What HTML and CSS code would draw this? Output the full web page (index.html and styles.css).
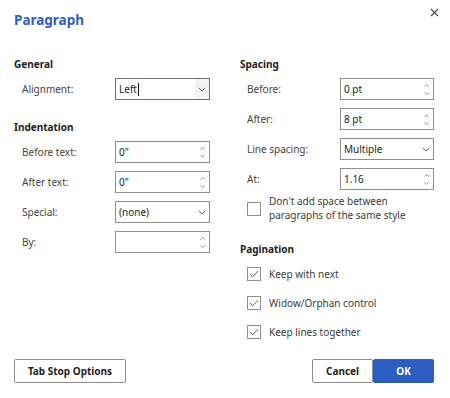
FILE: index.html
```html
<!DOCTYPE html>
<html lang="en">
<head>
<meta charset="utf-8">
<title>Paragraph</title>
<link rel="stylesheet" href="styles.css">
</head>
<body>
<div class="dialog">
  <header class="titlebar">
    <h1 class="title">Paragraph</h1>
    <span class="close"><svg width="9" height="9" viewBox="0 0 9 9"><path d="M1 1L8 8M8 1L1 8" stroke="#444" stroke-width="1.1" fill="none"/></svg></span>
  </header>

  <div class="columns">
    <div class="col col-left">
      <section class="section">
        <h2 class="heading">General</h2>
        <div class="rows">
          <div class="row">
            <span class="label">Alignment:</span>
            <div class="field select focused"><span class="value">Left<span class="cursor"></span></span><span class="caret caret-shaded"><svg width="8" height="5" viewBox="0 0 8 5"><path d="M0.8 0.8L4 4L7.2 0.8" stroke="#555" stroke-width="0.9" fill="none"/></svg></span></div>
          </div>
        </div>
      </section>
      <section class="section">
        <h2 class="heading">Indentation</h2>
        <div class="rows">
          <div class="row">
            <span class="label">Before text:</span>
            <div class="field spin"><span class="value">0"</span><span class="spinner"><svg width="5" height="3" viewBox="0 0 5 3"><path d="M0.5 2.5L2.5 0.6L4.5 2.5" stroke="#888" stroke-width="0.9" fill="none"/></svg><svg width="5" height="3" viewBox="0 0 5 3"><path d="M0.5 0.5L2.5 2.4L4.5 0.5" stroke="#888" stroke-width="0.9" fill="none"/></svg></span></div>
          </div>
          <div class="row">
            <span class="label">After text:</span>
            <div class="field spin"><span class="value">0"</span><span class="spinner"><svg width="5" height="3" viewBox="0 0 5 3"><path d="M0.5 2.5L2.5 0.6L4.5 2.5" stroke="#888" stroke-width="0.9" fill="none"/></svg><svg width="5" height="3" viewBox="0 0 5 3"><path d="M0.5 0.5L2.5 2.4L4.5 0.5" stroke="#888" stroke-width="0.9" fill="none"/></svg></span></div>
          </div>
          <div class="row">
            <span class="label">Special:</span>
            <div class="field select"><span class="value">(none)</span><span class="caret"><svg width="8" height="5" viewBox="0 0 8 5"><path d="M0.8 0.8L4 4L7.2 0.8" stroke="#555" stroke-width="0.9" fill="none"/></svg></span></div>
          </div>
          <div class="row">
            <span class="label">By:</span>
            <div class="field spin"><span class="value"></span><span class="spinner"><svg width="5" height="3" viewBox="0 0 5 3"><path d="M0.5 2.5L2.5 0.6L4.5 2.5" stroke="#888" stroke-width="0.9" fill="none"/></svg><svg width="5" height="3" viewBox="0 0 5 3"><path d="M0.5 0.5L2.5 2.4L4.5 0.5" stroke="#888" stroke-width="0.9" fill="none"/></svg></span></div>
          </div>
        </div>
      </section>
    </div>

    <div class="col col-right">
      <section class="section">
        <h2 class="heading">Spacing</h2>
        <div class="rows">
          <div class="row">
            <span class="label">Before:</span>
            <div class="field spin"><span class="value">0 pt</span><span class="spinner"><svg width="5" height="3" viewBox="0 0 5 3"><path d="M0.5 2.5L2.5 0.6L4.5 2.5" stroke="#888" stroke-width="0.9" fill="none"/></svg><svg width="5" height="3" viewBox="0 0 5 3"><path d="M0.5 0.5L2.5 2.4L4.5 0.5" stroke="#888" stroke-width="0.9" fill="none"/></svg></span></div>
          </div>
          <div class="row">
            <span class="label">After:</span>
            <div class="field spin"><span class="value">8 pt</span><span class="spinner"><svg width="5" height="3" viewBox="0 0 5 3"><path d="M0.5 2.5L2.5 0.6L4.5 2.5" stroke="#888" stroke-width="0.9" fill="none"/></svg><svg width="5" height="3" viewBox="0 0 5 3"><path d="M0.5 0.5L2.5 2.4L4.5 0.5" stroke="#888" stroke-width="0.9" fill="none"/></svg></span></div>
          </div>
          <div class="row">
            <span class="label">Line spacing:</span>
            <div class="field select"><span class="value">Multiple</span><span class="caret"><svg width="8" height="5" viewBox="0 0 8 5"><path d="M0.8 0.8L4 4L7.2 0.8" stroke="#555" stroke-width="0.9" fill="none"/></svg></span></div>
          </div>
          <div class="row">
            <span class="label">At:</span>
            <div class="field spin"><span class="value">1.16</span><span class="spinner"><svg width="5" height="3" viewBox="0 0 5 3"><path d="M0.5 2.5L2.5 0.6L4.5 2.5" stroke="#888" stroke-width="0.9" fill="none"/></svg><svg width="5" height="3" viewBox="0 0 5 3"><path d="M0.5 0.5L2.5 2.4L4.5 0.5" stroke="#888" stroke-width="0.9" fill="none"/></svg></span></div>
          </div>
        </div>
        <div class="check check-multi">
          <span class="box"></span>
          <span class="check-text">Don't add space between<br>paragraphs of the same style</span>
        </div>
      </section>
      <section class="section">
        <h2 class="heading">Pagination</h2>
        <div class="rows rows-checks">
          <div class="check">
            <span class="box"><svg width="12" height="12" viewBox="0 0 12 12"><path d="M2 6.2L4.7 8.8L10 3.2" stroke="#444" stroke-width="0.9" fill="none"/></svg></span>
            <span class="check-text">Keep with next</span>
          </div>
          <div class="check">
            <span class="box"><svg width="12" height="12" viewBox="0 0 12 12"><path d="M2 6.2L4.7 8.8L10 3.2" stroke="#444" stroke-width="0.9" fill="none"/></svg></span>
            <span class="check-text">Widow/Orphan control</span>
          </div>
          <div class="check">
            <span class="box"><svg width="12" height="12" viewBox="0 0 12 12"><path d="M2 6.2L4.7 8.8L10 3.2" stroke="#444" stroke-width="0.9" fill="none"/></svg></span>
            <span class="check-text">Keep lines together</span>
          </div>
        </div>
      </section>
    </div>
  </div>

  <footer class="footer">
    <button class="btn btn-tabs">Tab Stop Options</button>
    <div class="btn-group">
      <button class="btn btn-cancel">Cancel</button>
      <button class="btn btn-ok">OK</button>
    </div>
  </footer>
</div>
</body>
</html>
```

FILE: styles.css
```css
* {
  box-sizing: border-box;
  margin: 0;
  padding: 0;
}

html,
body {
  width: 450px;
  height: 398px;
  background: #ffffff;
  overflow: hidden;
}

body {
  font-family: "Noto Sans", "Open Sans", sans-serif;
  font-size: 10px;
  color: #3b3b3b;
}

.dialog {
  height: 398px;
  display: flex;
  flex-direction: column;
  padding: 0 16px 15px 14px;
}

.titlebar {
  display: flex;
  justify-content: space-between;
  align-items: flex-start;
  height: 30px;
  padding-top: 10px;
}

.title {
  font-size: 13.5px;
  font-weight: 700;
  line-height: 20px;
  color: #2f5ec4;
}

.close {
  display: flex;
  margin-top: -2px;
  margin-right: -5px;
}

.columns {
  display: grid;
  grid-template-columns: 196px 194px;
  column-gap: 30px;
  margin-top: 24px;
}

.col {
  display: flex;
  flex-direction: column;
}

.section + .section {
  margin-top: 17px;
}

.heading {
  font-size: 10px;
  font-weight: 700;
  line-height: 16px;
  padding-top: 2px;
  height: 18px;
  color: #222222;
  margin-bottom: 6px;
}

.rows {
  display: flex;
  flex-direction: column;
  gap: 8px;
}

.rows-checks {
  gap: 7px;
}

.row {
  display: flex;
  align-items: center;
  height: 22px;
}

.label {
  color: #444444;
}

.col-left .label {
  width: 101px;
  padding-left: 8px;
}

.col-right .label {
  width: 100px;
  padding-left: 7px;
}

.field {
  display: flex;
  align-items: stretch;
  height: 22px;
  border: 1px solid #8e8e8e;
  background: #ffffff;
  color: #222222;
}

.col-left .field {
  width: 95px;
}

.col-right .field {
  width: 94px;
}

.field.focused {
  border-color: #6f6f6f;
}

.value {
  flex: 1;
  display: flex;
  align-items: center;
  padding-left: 3px;
}

.cursor {
  display: inline-block;
  width: 1px;
  height: 13px;
  background: #111111;
  margin-left: 1px;
}

.caret {
  width: 14px;
  display: flex;
  align-items: center;
  justify-content: center;
}

.caret-shaded {
  background: #f3f3f3;
}

.spinner {
  width: 14px;
  display: flex;
  flex-direction: column;
  align-items: center;
  justify-content: space-between;
  padding: 5px 0 4px;
}

.spinner svg {
  display: block;
}

.check {
  display: flex;
  align-items: center;
  height: 22px;
  padding-left: 7px;
  color: #3b3b3b;
}

.check-multi {
  height: 27px;
  margin-top: 5px;
  line-height: 13.5px;
}

.box {
  width: 14px;
  height: 14px;
  border: 1px solid #8e8e8e;
  background: #ffffff;
  display: flex;
  align-items: center;
  justify-content: center;
  margin-right: 8px;
  flex-shrink: 0;
}

.footer {
  margin-top: auto;
  display: flex;
  justify-content: space-between;
  align-items: flex-end;
}

.btn {
  font-family: "Noto Sans", "Open Sans", sans-serif;
  font-size: 10px;
  font-weight: 700;
  height: 24px;
  border: 1px solid #8e8e8e;
  border-radius: 2px;
  background: #ffffff;
  color: #222222;
}

.btn-tabs {
  width: 112px;
}

.btn-group {
  display: flex;
}

.btn-cancel {
  width: 61px;
}

.btn-ok {
  width: 61px;
  background: #2b5dc2;
  border-color: #2b5dc2;
  color: #ffffff;
}
```
